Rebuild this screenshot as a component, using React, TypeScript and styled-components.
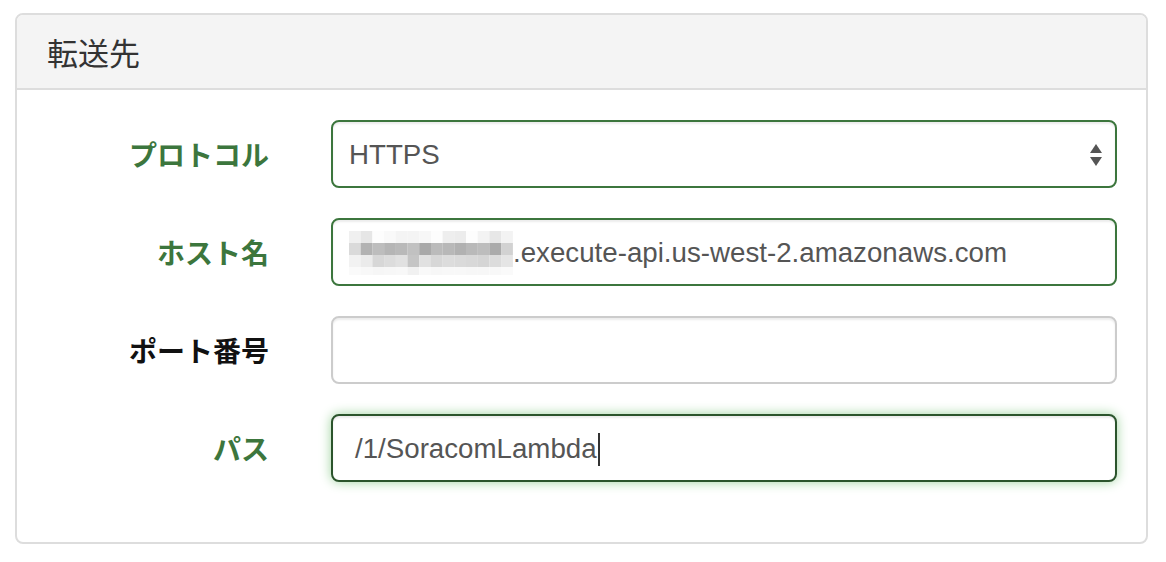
import styled, { createGlobalStyle } from 'styled-components';

const GlobalStyle = createGlobalStyle`
  html, body {
    margin: 0;
    padding: 0;
    background: #FFFFFF;
  }
  body {
    font-family: "Liberation Sans", "Noto Sans CJK JP", sans-serif;
  }
`;

// pixelated blur over the masked host name
const blurRows = [
  ['#f0f0f0', '#e6e6e6', '#fdfdfd', '#f9f9f9', '#f4f4f4', '#f4f4f4', '#f7f7f7', '#fdfdfd', '#eeeeee', '#ececec', '#fdfdfd', '#f3f3f3', '#e7e7e7', '#f3f3f3'],
  ['#dadada', '#b2b2b2', '#bdbdbd', '#b5b5b5', '#b9b9b9', '#c1c1c1', '#a9a9a9', '#bbbbbb', '#b8b8b8', '#b1b1b1', '#b9b9b9', '#bdbdbd', '#ababab', '#d2d2d2'],
  ['#f2f2f2', '#ebebeb', '#d7d7d7', '#dcdcdc', '#e1e1e1', '#c5c5c5', '#e1e1e1', '#d7d7d7', '#dcdcdc', '#dadada', '#d8d8d8', '#d5d5d5', '#dcdcdc', '#e5e5e5'],
  ['#fafafa', '#f8f8f8', '#f6f6f6', '#f7f7f7', '#f8f8f8', '#f1f1f1', '#f9f9f9', '#f7f7f7', '#f8f8f8', '#f8f8f8', '#f7f7f7', '#f7f7f7', '#f8f8f8', '#fafafa'],
];

const rows = [
  { label: 'プロトコル', state: 'success' as const, kind: 'select' as const, value: 'HTTPS' },
  { label: 'ホスト名', state: 'success' as const, kind: 'host' as const, value: '.execute-api.us-west-2.amazonaws.com' },
  { label: 'ポート番号', state: 'normal' as const, kind: 'text' as const, value: '' },
  { label: 'パス', state: 'focus' as const, kind: 'text' as const, value: '/1/SoracomLambda' },
];

function BlurredName() {
  return (
    <svg width="164" height="44" viewBox="0 0 164 44" style={{ display: 'block', flexShrink: 0 }}>
      {blurRows.map((row, r) =>
        row.map((c, i) => (
          <rect key={`${r}-${i}`} x={i * 11.7} y={r * 12} width="11.8" height={r === 3 ? 8 : 12.1} fill={c} />
        ))
      )}
    </svg>
  );
}

function SelectArrows() {
  return (
    <svg width="14" height="24" viewBox="0 0 14 24">
      <path d="M7 1 L13 10 L1 10 Z" fill="#555555" />
      <path d="M1 14 L13 14 L7 23 Z" fill="#555555" />
    </svg>
  );
}

export default function App() {
  return (
    <>
      <GlobalStyle />
      <Page>
        <Panel>
          <PanelHeading>転送先</PanelHeading>
          <PanelBody>
            {rows.map((row) => (
              <FormGroup key={row.label}>
                <Label state={row.state}>{row.label}</Label>
                <Control state={row.state}>
                  {row.kind === 'select' && (
                    <>
                      <SelectText>{row.value}</SelectText>
                      <SelectArrows />
                    </>
                  )}
                  {row.kind === 'host' && (
                    <HostValue>
                      <BlurredName />
                      <span>{row.value}</span>
                    </HostValue>
                  )}
                  {row.kind === 'text' && (
                    <InputText>
                      {row.value}
                      {row.state === 'focus' && <Caret />}
                    </InputText>
                  )}
                </Control>
              </FormGroup>
            ))}
          </PanelBody>
        </Panel>
      </Page>
    </>
  );
}

type FieldState = 'success' | 'normal' | 'focus';

const Page = styled.div`
  padding: 13px 18px 18px 15px;
  width: 1166px;
  box-sizing: border-box;
`;

const Panel = styled.div`
  border: 2px solid #dddddd;
  border-radius: 8px;
  background: #FFFFFF;
  overflow: hidden;
`;

const PanelHeading = styled.div`
  background: #f4f4f4;
  border-bottom: 2px solid #dddddd;
  height: 75px;
  box-sizing: border-box;
  padding: 0 30px;
  display: flex;
  align-items: center;
  font-family: "Noto Sans CJK JP", sans-serif;
  font-size: 31px;
  color: #333333;
`;

const PanelBody = styled.div`
  padding: 30px 29px 60px 30px;
  display: flex;
  flex-direction: column;
  gap: 30px;
`;

const FormGroup = styled.div`
  display: grid;
  grid-template-columns: 222px 1fr;
  column-gap: 62px;
  align-items: center;
`;

const Label = styled.div<{ state: FieldState }>`
  text-align: right;
  font-family: "Noto Sans CJK JP", sans-serif;
  font-weight: 700;
  font-size: 28px;
  color: ${({ state }) => (state === 'normal' ? '#111111' : '#3c763d')};
`;

const Control = styled.div<{ state: FieldState }>`
  height: 68px;
  box-sizing: border-box;
  border-radius: 8px;
  border: 2px solid
    ${({ state }) =>
      state === 'normal' ? '#cccccc' : state === 'focus' ? '#2b542c' : '#3c763d'};
  box-shadow: ${({ state }) =>
    state === 'focus'
      ? 'inset 0 2px 2px rgba(0,0,0,.075), 0 0 12px #9fd39f'
      : 'inset 0 2px 2px rgba(0,0,0,.075)'};
  background: #FFFFFF;
  display: flex;
  align-items: center;
  justify-content: space-between;
  padding: 2px 12px 0 22px;
  font-family: "Liberation Sans", sans-serif;
  font-size: 27.7px;
  color: #555555;
`;

const SelectText = styled.span`
  margin-left: -6px;
`;

const HostValue = styled.div`
  display: flex;
  align-items: center;
  margin-left: -6px;
  flex: 1;
`;

const InputText = styled.div`
  display: flex;
  align-items: center;
  flex: 1;
`;

const Caret = styled.span`
  display: inline-block;
  width: 2px;
  height: 33px;
  background: #333333;
  margin-left: 1px;
`;
